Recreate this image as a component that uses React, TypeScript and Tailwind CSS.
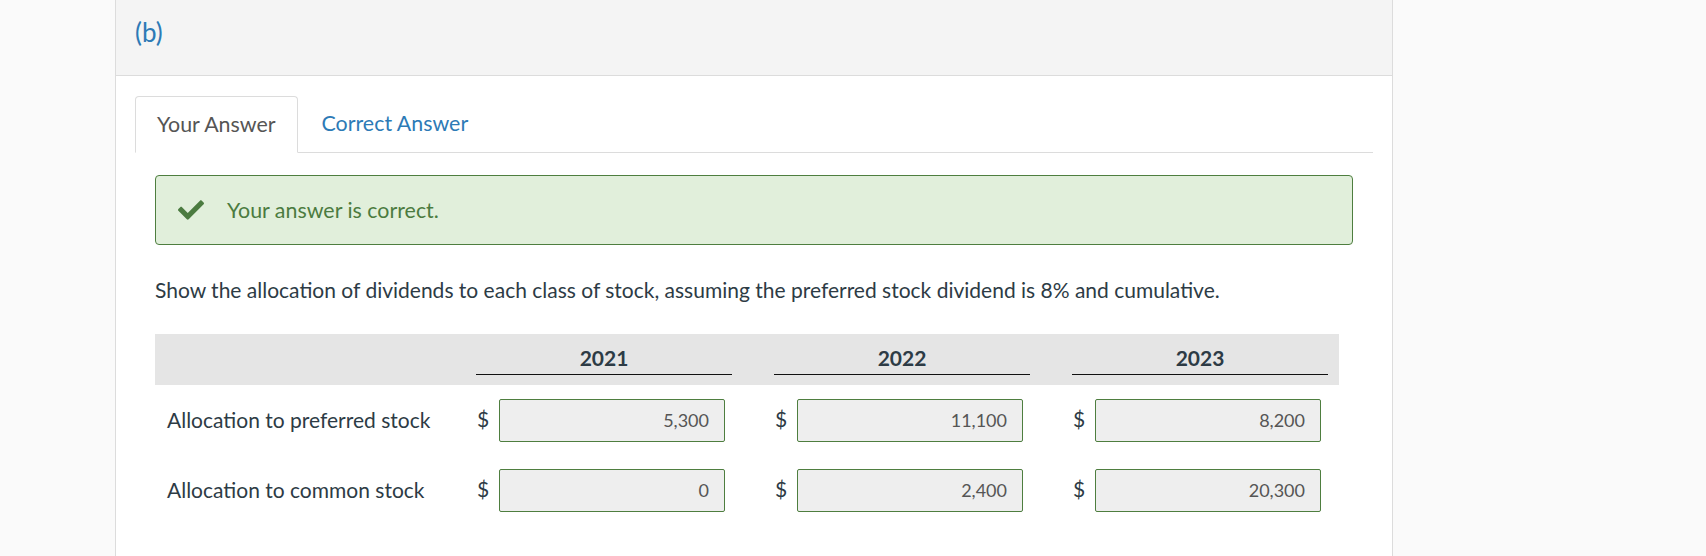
import React from 'react';
import { FaCheck } from 'react-icons/fa';

const rows = [
  { label: 'Allocation to preferred stock', values: ['5,300', '11,100', '8,200'] },
  { label: 'Allocation to common stock', values: ['0', '2,400', '20,300'] },
];

const years = ['2021', '2022', '2023'];

export default function App() {
  return (
    <div className="min-h-[556px] bg-[#fafafa] flex font-['Lato','Liberation_Sans',sans-serif]">
      <div className="w-[115px] shrink-0" />

      <div className="w-[1278px] shrink-0 bg-white border-x border-[#dcdcdc]">
        {/* ── Cabeçalho ─────────────────────────────────────────── */}
        <div className="h-[76px] bg-[#f4f4f4] border-b border-[#dcdcdc] pl-[19px] pt-[13px]">
          <span className="text-[26px] leading-[38px] text-[#2d7ab6]">(b)</span>
        </div>

        {/* ── Abas ──────────────────────────────────────────────── */}
        <div className="px-[19px] pt-[20px]">
          <div className="flex items-end border-b border-[#dcdcdc] h-[57px]">
            <div className="h-[57px] -mb-px px-[21px] flex items-center bg-white border border-b-white border-[#dcdcdc] rounded-t-[4px] text-[21.4px] text-[#555555]">
              Your Answer
            </div>
            <div className="h-[57px] px-[24px] flex items-center text-[21.4px] text-[#2d7ab6]">
              Correct Answer
            </div>
          </div>
        </div>

        {/* ── Conteúdo ──────────────────────────────────────────── */}
        <div className="px-[39px]">
          <div className="mt-[22px] h-[70px] flex items-center gap-[23px] pl-[22px] bg-[#e1efdb] border border-[#4e7e3f] rounded-[4px] text-[#4b7b40]">
            <FaCheck size={26} />
            <span className="text-[21.4px]">Your answer is correct.</span>
          </div>

          <p className="mt-[30px] text-[21px] leading-[30px] text-[#2d3b45]">
            Show the allocation of dividends to each class of stock, assuming the preferred stock dividend is 8% and cumulative.
          </p>

          {/* ── Tabela ────────────────────────────────────────────── */}
          <div className="mt-[29px] w-[1184px]">
            <div className="flex items-end h-[51px] pb-[10px] bg-[#e5e5e5]">
              <div className="w-[321px] shrink-0" />
              {years.map((y, i) => (
                <div
                  key={y}
                  className={`w-[256px] shrink-0 border-b border-[#111111] pb-[2px] text-center text-[21px] leading-[28px] font-bold text-[#2d3b45] ${i === 0 ? '' : 'ml-[42px]'}`}
                >
                  {y}
                </div>
              ))}
            </div>

            {rows.map((r) => (
              <div key={r.label} className="flex items-center h-[70px]">
                <div className="w-[321px] shrink-0 pl-[12px] text-[21px] text-[#2d3b45]">{r.label}</div>
                {r.values.map((v, i) => (
                  <div key={i} className={`w-[256px] shrink-0 flex items-center ${i === 0 ? '' : 'ml-[42px]'}`}>
                    <span className="w-[23px] pl-px text-[21px] leading-none text-[#2d3b45] -mt-[4px]">$</span>
                    <div className="w-[226px] h-[43px] flex items-center justify-end pr-[15px] bg-[#eeeeee] border border-[#4e7e3f] rounded-[2px] text-[18px] text-[#555555]">
                      {v}
                    </div>
                  </div>
                ))}
              </div>
            ))}
          </div>
        </div>
      </div>
    </div>
  );
}
